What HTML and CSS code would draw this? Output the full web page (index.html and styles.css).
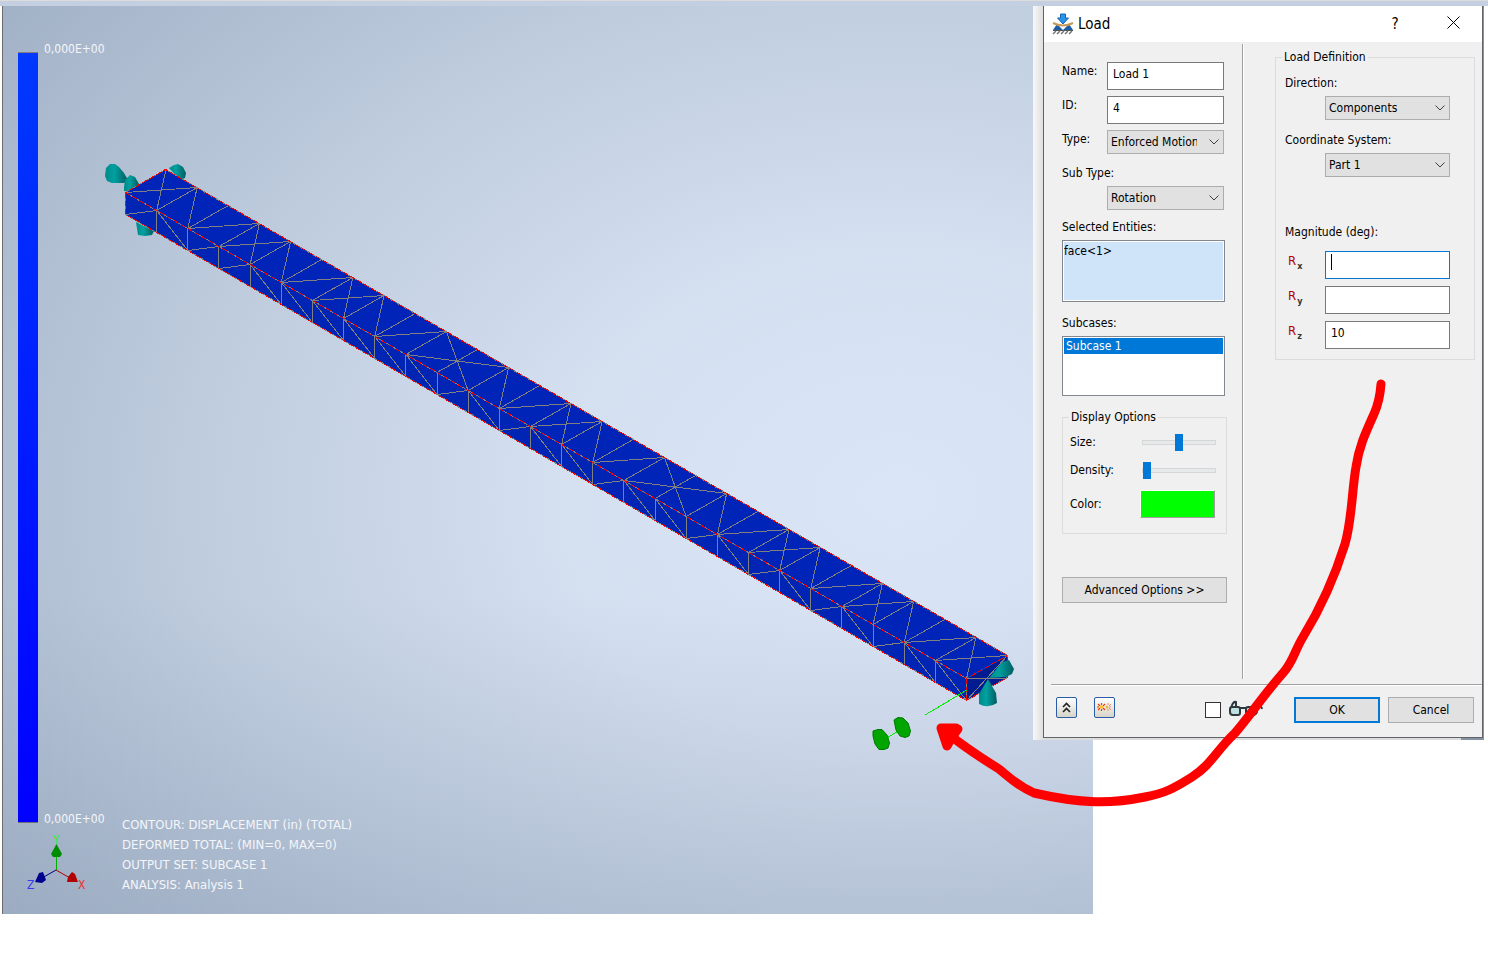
FILE: index.html
```
<!DOCTYPE html>
<html lang="en">
<head>
    <meta charset="UTF-8">
    <meta name="viewport" content="width=device-width, initial-scale=1.0">
    <title>Load</title>
    <link rel="stylesheet" href="styles.css">
</head>
<body>
    <div class="top-strip"></div>

    <main class="viewport">
        <svg class="model" viewBox="3 6 1090 908" aria-label="Beam model">
            <defs>
                <linearGradient id="teal" x1="0" x2="1">
                    <stop offset="0" stop-color="#008a8a"/>
                    <stop offset="0.4" stop-color="#00a0a0"/>
                    <stop offset="1" stop-color="#005c60"/>
                </linearGradient>
            </defs>

            <!-- constraints behind the beam -->
            <g fill="url(#teal)">
                <path d="M105 176L106 168 110 164H115L119 167 124 173 128 180 124 183H112L107 181z"/>
                <path d="M124 187L125 180 130 175 135 177 139 184 138 191 124 191z"/>
                <path d="M169 168L174 165 178 164 183 167 186 173 185 178 180 180z"/>
                <path d="M136 222L154 231 152 235 145 236 138 235z"/>
            </g>

            <g transform="translate(-.5 .5)">
                <!-- beam faces -->
                <path fill="#0024b4" d="M126 192L967 678V700L126 214z"/>
                <path fill="#0024b8" d="M126 192L166 169 1008 655 967 678z"/>
                <path fill="#001c90" d="M967 678L1008 655V677L967 700z"/>

                <!-- top mesh: x counts elements along the beam, y goes across it -->
                <path class="mesh" transform="matrix(31.15 18 40.5 -23 126 192)" d="M0 0L1 1M1 0L0 1M1 0L1 1M2 0L1 1M2 0L2 1M2 0L3 1M3 0L3 1M3 0L4 1M4 0L3 1M4 0L4 1M5 0L4 1M5 0L5 1M5 0L6 1M6 0L6 1M6 0L7 1M7 0L6 1M7 0L7 1M8 0L7 1M8 0L8 1M8 0L9 1M9 0L9 1M9 0L10 .5L11 1M9 1L10 .5L11 0M10 0L10 1M11 0L11 1M12 0L11 1M12 0L12 1M12 0L13 1M13 0L13 1M13 0L14 1M14 0L13 1M14 0L14 1M15 0L14 1M15 0L15 1M15 0L16 1M16 0L16 1M16 0L17 .5L18 1M16 1L17 .5L18 0M17 0L17 1M18 0L18 1M19 0L18 1M19 0L19 1M19 0L20 1M20 0L20 1M20 0L21 1M21 0L20 1M21 0L21 1M22 0L21 1M22 0L22 1M22 0L23 1M23 0L23 1M23 0L24 1M24 0L23 1M24 0L24 1M25 0L24 1M25 0L25 1M25 0L26 1M26 0L26 1M26 0L27 1M27 0L26 1"/>

                <!-- front mesh -->
                <path class="mesh" transform="matrix(31.15 18 0 22 126 192)" d="M0 0V1M1 0V1M2 0V1M3 0V1M4 0V1M5 0V1M6 0V1M7 0V1M8 0V1M9 0V1M10 0V1M11 0V1M12 0V1M13 0V1M14 0V1M15 0V1M16 0V1M17 0V1M18 0V1M19 0V1M20 0V1M21 0V1M22 0V1M23 0V1M24 0V1M25 0V1M26 0V1M27 0V1M0 1L1 0L2 1L3 0M3 1L4 0L5 1M5 0L6 1M6 0L7 1M7 0L8 1M8 0L9 1M9 0L10 1L11 0L12 1L13 0L14 1M14 0L15 1L16 0L17 1M17 0L18 1L19 0L20 1L21 0L22 1L23 0L24 1L25 0L26 1M26 0L27 1"/>
                <path class="mesh" d="M967 678H1007M967 700L1008 655"/>

                <path class="edge-base" d="M126 192L967 678M126 214L967 700 1008 677V655L166 169 126 192z"/>
                <path class="edge" d="M126 192L967 678 1008 655M967 678V700M126 192V214L967 700 1008 677V655L166 169 126 192"/>
            </g>

            <!-- constraints at the free end -->
            <g fill="url(#teal)">
                <path d="M988 679L996 693 997 703Q988 709 979 704V694z"/>
                <path d="M989 678L1002 662 1009 660 1014 669 1012 674 1006 677z"/>
            </g>

            <!-- enforced rotation symbol -->
            <path class="axis-line" d="M967 690L925 715M887 738L898 731"/>
            <g fill="#00a500" stroke="#007800">
                <path d="M873 731L878 729.500H882L887 735 889.500 743 888 748 884 749.500H879L875 744 873 736z"/>
                <path d="M894 720L898 717.500 903 718 908 723 910.500 731 909 736 905 737.500 900 736 896 730z"/>
            </g>

            <!-- triad -->
            <g class="triad">
                <path stroke="#00b000" d="M56.500 870V850"/>
                <path stroke="#b00000" d="M56 870L70 878"/>
                <path stroke="#000090" d="M56 870L42 878"/>
                <path fill="#008c00" d="M56.500 844L62 854 60 857H53L51 854z"/>
                <path fill="#b00000" d="M78 882L67 882 68 877 72 872 75 874z"/>
                <path fill="#000090" d="M35 882L39 873 43 872 46 880 42 883z"/>
                <text x="53" y="844" fill="#30ee30">Y</text>
                <text x="27" y="889" fill="#3838ee">Z</text>
                <text x="78" y="889" fill="#ee3030">X</text>
            </g>
        </svg>

        <section class="legend">
            <div class="legend-bar"></div>
            <div class="legend-values"><span>0,000E+00</span><span>0,000E+00</span></div>
        </section>

        <section class="output-info">
            <p>CONTOUR: DISPLACEMENT (in) (TOTAL)</p>
            <p>DEFORMED TOTAL: (MIN=0, MAX=0)</p>
            <p>OUTPUT SET: SUBCASE 1</p>
            <p>ANALYSIS: Analysis 1</p>
        </section>
    </main>

    <div class="dialog-frame">
        <form class="dialog" role="dialog" aria-labelledby="dialog-title">
            <header class="title-bar">
                <svg width="22" height="22" viewBox="0 0 22 22" aria-hidden="true">
                    <path d="M1 17l4-6 6 6zM11 17l6-6 4 6z" fill="#1b5ea8"/>
                    <path d="M1 10Q11 15 21 10" fill="none" stroke="#c59a58" stroke-width="2"/>
                    <path d="M8.500 1h5v4h3l-5.500 6-5.500-6h3z" fill="#2b93e8" stroke="#1767b0"/>
                    <path d="M1 17.500h20" stroke="#555"/>
                    <path d="M1 21l3-3M5 21l3-3M9 21l3-3M13 21l3-3M17 21l3-3" stroke="#777" stroke-width="1.500"/>
                </svg>
                <h1 id="dialog-title">Load</h1>
                <button type="button" class="title-button" aria-label="Help">?</button>
                <button type="button" class="title-button" aria-label="Close">
                    <svg width="13" height="13" viewBox="0 0 13 13"><path d="M.5 .5l12 12M12.500 .5l-12 12" stroke="#000" fill="none"/></svg>
                </button>
            </header>

            <div class="panes">
                <div class="pane-left">
                    <div class="field-row">
                        <label for="name">Name:</label>
                        <input type="text" id="name" value="Load 1">
                    </div>
                    <div class="field-row">
                        <label for="load-id">ID:</label>
                        <input type="text" id="load-id" value="4">
                    </div>
                    <div class="field-row">
                        <label for="type">Type:</label>
                        <div class="combo">
                            <select id="type"><option>Enforced Motion</option></select>
                            <svg width="10" height="6" viewBox="0 0 10 6"><path d="M.5 .5L5 5 9.500 .5"/></svg>
                        </div>
                    </div>
                    <label class="block-label" for="sub-type">Sub Type:</label>
                    <div class="combo combo-indent">
                        <select id="sub-type"><option>Rotation</option></select>
                        <svg width="10" height="6" viewBox="0 0 10 6"><path d="M.5 .5L5 5 9.500 .5"/></svg>
                    </div>
                    <label class="block-label" for="entities">Selected Entities:</label>
                    <textarea id="entities" class="entities" readonly>face&lt;1&gt;</textarea>
                    <label class="block-label subcase-label" for="subcases">Subcases:</label>
                    <select id="subcases" class="subcases" size="3"><option selected>Subcase 1</option></select>

                    <fieldset class="display-options">
                        <legend>Display Options</legend>
                        <div class="option-row">
                            <label for="size">Size:</label>
                            <input type="range" id="size" min="0" max="100" value="50">
                        </div>
                        <div class="option-row">
                            <label for="density">Density:</label>
                            <input type="range" id="density" min="0" max="100" value="0">
                        </div>
                        <div class="option-row color-row">
                            <label for="color">Color:</label>
                            <button type="button" id="color" class="swatch"></button>
                        </div>
                    </fieldset>

                    <button type="button" class="button advanced">Advanced Options &gt;&gt;</button>
                </div>

                <div class="pane-right">
                    <fieldset class="definition">
                        <legend>Load Definition</legend>
                        <label class="block-label" for="direction">Direction:</label>
                        <div class="combo">
                            <select id="direction"><option>Components</option></select>
                            <svg width="10" height="6" viewBox="0 0 10 6"><path d="M.5 .5L5 5 9.500 .5"/></svg>
                        </div>
                        <label class="block-label" for="coord">Coordinate System:</label>
                        <div class="combo">
                            <select id="coord"><option>Part 1</option></select>
                            <svg width="10" height="6" viewBox="0 0 10 6"><path d="M.5 .5L5 5 9.500 .5"/></svg>
                        </div>
                        <p class="magnitude">Magnitude (deg):</p>
                        <div class="component-row">
                            <label for="rx">R<sub>x</sub></label>
                            <input type="text" id="rx" class="active" value="">
                            <span class="caret"></span>
                        </div>
                        <div class="component-row">
                            <label for="ry">R<sub>y</sub></label>
                            <input type="text" id="ry" value="">
                        </div>
                        <div class="component-row">
                            <label for="rz">R<sub>z</sub></label>
                            <input type="text" id="rz" value="10">
                        </div>
                    </fieldset>
                </div>
            </div>

            <footer class="dialog-footer">
                <button type="button" class="tool-button" aria-label="Collapse">
                    <svg width="11" height="13" viewBox="0 0 11 13"><path d="M2 6l3.500-3.500L9 6M2 11l3.500-3.500L9 11" fill="none" stroke="#222" stroke-width="1.600"/></svg>
                </button>
                <button type="button" class="tool-button" aria-label="Highlight">
                    <svg width="17" height="11" viewBox="0 0 17 11">
                        <path d="M5.500 1v2M5.500 7v2M1 5h2M2 2l2 2M2 8l2-2M9 2L7 4M9 8L7 6" stroke="#e83a10" stroke-width="1.200"/>
                        <path d="M12 1v2M12 7v2M13 5h2M15 2l-2 2M15 8l-2-2" stroke="#e09068"/>
                        <circle cx="5.500" cy="5" r="1.800" fill="#ffc020"/>
                        <circle cx="11" cy="5" r="1.500" fill="#f0b050"/>
                    </svg>
                </button>
                <input type="checkbox" id="preview" aria-label="Preview">
                <label for="preview" class="glasses">
                    <svg width="36" height="18" viewBox="0 0 36 18" fill="none" stroke="#2c3a3d" stroke-width="2">
                        <path d="M2 9Q2 7 4 7H10Q12 7 12 9V13Q12 15 10 15H5Q2 15 2 12z" fill="#bfdfe3"/>
                        <path d="M18 9Q18 7 20 7H27Q29 7 29 9V12Q28 15 25 15H21Q18 15 18 12z" fill="#bfdfe3"/>
                        <path d="M12 8H18M3 8Q5 1 8 2V6M29 9Q33 4 34 9"/>
                    </svg>
                </label>
                <button type="submit" class="button ok">OK</button>
                <button type="button" class="button">Cancel</button>
            </footer>
        </form>
    </div>

    <!-- hand-drawn arrow from the magnitude fields to the load symbol -->
    <svg class="annotation" width="568" height="450" viewBox="920 370 568 450" aria-hidden="true">
        <path d="M1381 384C1380 398 1378 405 1374 414C1365 434 1359 447 1356 467C1352 489 1352 520 1345 544C1335 576 1322 606 1303 637C1294 652 1293 662 1283 673C1262 697 1249 717 1235 733C1216 751 1211 765 1192 777C1173 789 1165 793 1145 797C1111 804 1082 804 1034 793C1016 785 1009 777 999 769C978 756 964 747 946 732"/>
        <path class="arrow-head" d="M956 728L941 728 947 746 952 737 958 729"/>
    </svg>
</body>
</html>
```
FILE: styles.css
```
* {
    box-sizing: border-box;
}

body {
    position: relative;
    margin: 0;
    background: #fff;
    color: #000;
    font-family: "DejaVu Sans Condensed", "DejaVu Sans", sans-serif;
    font-size: 12px;
    line-height: 18px;
}

h1,
p {
    margin: 0;
    font-weight: normal;
}

.top-strip {
    height: 6px;
    border-top: 1px solid #dcdcdc;
    background: #c5cfe2;
}

.viewport {
    position: relative;
    width: calc(100% - 397px);
    margin-left: 2px;
    border-left: 1px solid #6c6c6c;
    background: radial-gradient(ellipse 1150px 850px at 82% 54%, #dae5f7 0%, #d4dff0 30%, #bfcddf 60%, #a9b8cc 88%, #9fafc4 100%);
}

.viewport::before {
    content: "";
    position: absolute;
    inset: 0;
    background: linear-gradient(to bottom, transparent 65%, rgba(125, 142, 168, 0.25) 100%);
}

.model {
    position: relative;
    display: block;
    width: 100%;
    height: auto;
}

.mesh,
.edge-base,
.edge,
.axis-line {
    fill: none;
    stroke: #808080;
    stroke-width: 1px;
    vector-effect: non-scaling-stroke;
    shape-rendering: crispEdges;
}

.edge {
    stroke: #f00;
    stroke-dasharray: 5 3;
}

.axis-line {
    stroke: #00f000;
}

.triad {
    font-size: 12px;
}

.legend {
    position: absolute;
    top: 46px;
    bottom: 91px;
    left: 15px;
    display: flex;
    gap: 6px;
}

.legend-bar {
    width: 20px;
    border-top: 1px solid #808080;
    border-bottom: 1px solid #707070;
    background: linear-gradient(#0038ff, #00f);
}

.legend-values {
    display: flex;
    flex-direction: column;
    justify-content: space-between;
    margin: -12px 0 -5px;
    color: #f4f6fa;
}

.output-info {
    position: absolute;
    bottom: 19px;
    left: 119px;
    color: #f4f6fa;
    font-size: 13px;
    line-height: 20px;
}

.dialog-frame {
    position: absolute;
    top: 6px;
    right: 4px;
    width: 451px;
    padding: 0 1px 2px 10px;
    background: linear-gradient(to right, #f8f8f8, #dcdcdc 11px, #dcdcdc 428px, #8792a3 428px);
}

.dialog {
    border: 1px solid #606368;
    border-top: 0;
    background: #f0f0f0;
}

.title-bar {
    display: flex;
    align-items: center;
    height: 36px;
    padding-left: 8px;
    background: #fff;
}

.title-bar h1 {
    flex: 1;
    margin-left: 4px;
    font-size: 15px;
}

.title-button {
    width: 58px;
    height: 34px;
    padding: 0;
    border: 0;
    background: none;
    font-family: inherit;
    font-size: 15px;
}

.panes {
    display: flex;
    height: 643px;
    margin-left: 7px;
    border-bottom: 1px solid #a0a0a0;
    box-shadow: 0 1px #fff;
}

.pane-left {
    width: 192px;
    height: 635px;
    margin-top: 2px;
    padding: 18px 15px 0 11px;
    border-right: 1px solid #a0a0a0;
    box-shadow: 1px 0 #fff;
}

.pane-right {
    flex: 1;
    padding: 6px 7px 0 32px;
}

input[type="text"],
select,
textarea {
    font-family: inherit;
    font-size: 12px;
    line-height: 18px;
    color: #000;
    border: 1px solid #7a7a7a;
    border-radius: 0;
    outline: none;
}

input[type="text"] {
    width: 117px;
    height: 28px;
    padding: 0 5px 4px;
    background: #fff;
}

.field-row {
    display: flex;
    justify-content: space-between;
    width: 162px;
    margin-bottom: 6px;
}

.field-row:nth-child(3) {
    margin-bottom: 10px;
}

.combo {
    position: relative;
    width: 117px;
    height: 24px;
}

.combo select {
    width: 100%;
    height: 100%;
    padding: 0 26px 0 3px;
    border-color: #adadad;
    background: #e1e1e1;
    appearance: none;
}

.combo svg {
    position: absolute;
    top: 9px;
    right: 5px;
    fill: none;
    stroke: #404040;
    pointer-events: none;
}

.combo-indent {
    margin: 0 0 8px 45px;
}

.block-label {
    display: block;
    margin-bottom: 4px;
}

.entities,
.subcases {
    display: block;
    width: 163px;
    padding: 1px;
    border: 1px solid #828790;
    overflow: hidden;
    resize: none;
}

.entities {
    height: 62px;
    background: #cfe4f8;
    box-shadow: inset 0 0 0 1px #fff;
}

.subcase-label {
    margin-top: 12px;
}

.subcases {
    height: 60px;
    background: #fff;
}

.subcases option {
    height: 16px;
    min-height: 16px;
    padding: 1px 2px 0;
    line-height: 16px;
}

.subcases option:checked {
    background: linear-gradient(#0078d7, #0078d7);
    color: #fff;
}

fieldset {
    min-width: 0;
    margin: 0;
    padding: 0;
    border: 1px solid #dcdcdc;
}

legend {
    padding: 0 2px;
}

.display-options {
    width: 165px;
    height: 126px;
    margin-top: 12px;
    padding: 2px 10px 0 7px;
}

.display-options legend {
    margin-left: -1px;
}

.option-row {
    display: flex;
    align-items: center;
    justify-content: space-between;
    height: 28px;
}

.color-row {
    margin: 6px 1px 0 0;
}

input[type="range"] {
    width: 74px;
    height: 17px;
    margin: 0;
    background: none;
    appearance: none;
}

input[type="range"]::-webkit-slider-runnable-track {
    height: 5px;
    border: 1px solid #d6d6d6;
    background: #e7eaea;
}

input[type="range"]::-webkit-slider-thumb {
    width: 8px;
    height: 17px;
    margin-top: -7px;
    background: #0078d7;
    appearance: none;
}

.swatch {
    width: 75px;
    height: 28px;
    border: 1px solid;
    border-color: #fff #a0a0a0 #a0a0a0 #fff;
    background: #0f0;
}

.button {
    width: 86px;
    height: 26px;
    padding: 0;
    border: 1px solid #adadad;
    background: #e1e1e1;
    color: #000;
    font-family: inherit;
    font-size: 12px;
}

.advanced {
    width: 165px;
    margin-top: 43px;
}

.definition {
    height: 312px;
    padding: 8px 24px 0 9px;
}

.definition legend {
    margin-left: -3px;
}

.definition .combo {
    width: 125px;
    margin: 0 0 11px auto;
}

.magnitude {
    margin: 46px 0 10px;
}

.component-row {
    position: relative;
    display: flex;
    justify-content: space-between;
    margin-bottom: 7px;
    padding-left: 3px;
}

.component-row label {
    padding-top: 1px;
    color: #b00000;
    font-size: 13px;
}

.component-row sub {
    margin-left: 1px;
    color: #333;
    font-size: 9px;
    font-weight: bold;
    line-height: 9px;
}

.component-row input[type="text"] {
    width: 125px;
}

.component-row input.active {
    border-color: #0078d7;
}

.caret {
    position: absolute;
    top: 3px;
    right: 118px;
    width: 1px;
    height: 16px;
    background: #000;
}

.dialog-footer {
    display: flex;
    align-items: flex-start;
    height: 52px;
    padding: 12px 8px 0 12px;
}

.tool-button {
    display: grid;
    place-items: center;
    width: 21px;
    height: 21px;
    margin-right: 17px;
    padding: 0;
    border: 1px solid #2a5caa;
    border-radius: 2px;
    background: linear-gradient(#fff, #d8d4c8);
}

.dialog-footer input[type="checkbox"] {
    width: 16px;
    height: 16px;
    margin: 5px 7px 0 auto;
    border: 1px solid #333;
    background: #fff;
    appearance: none;
}

.glasses {
    height: 18px;
    margin: 3px 30px 0 0;
}

.dialog-footer .button + .button {
    margin-left: 8px;
}

.dialog-footer .ok {
    border: 2px solid #0078d7;
}

.annotation {
    position: absolute;
    top: 370px;
    right: 0;
    fill: none;
    stroke: #f00;
    stroke-width: 9px;
    stroke-linecap: round;
    stroke-linejoin: round;
    pointer-events: none;
}

.annotation .arrow-head {
    fill: #f00;
}
```
